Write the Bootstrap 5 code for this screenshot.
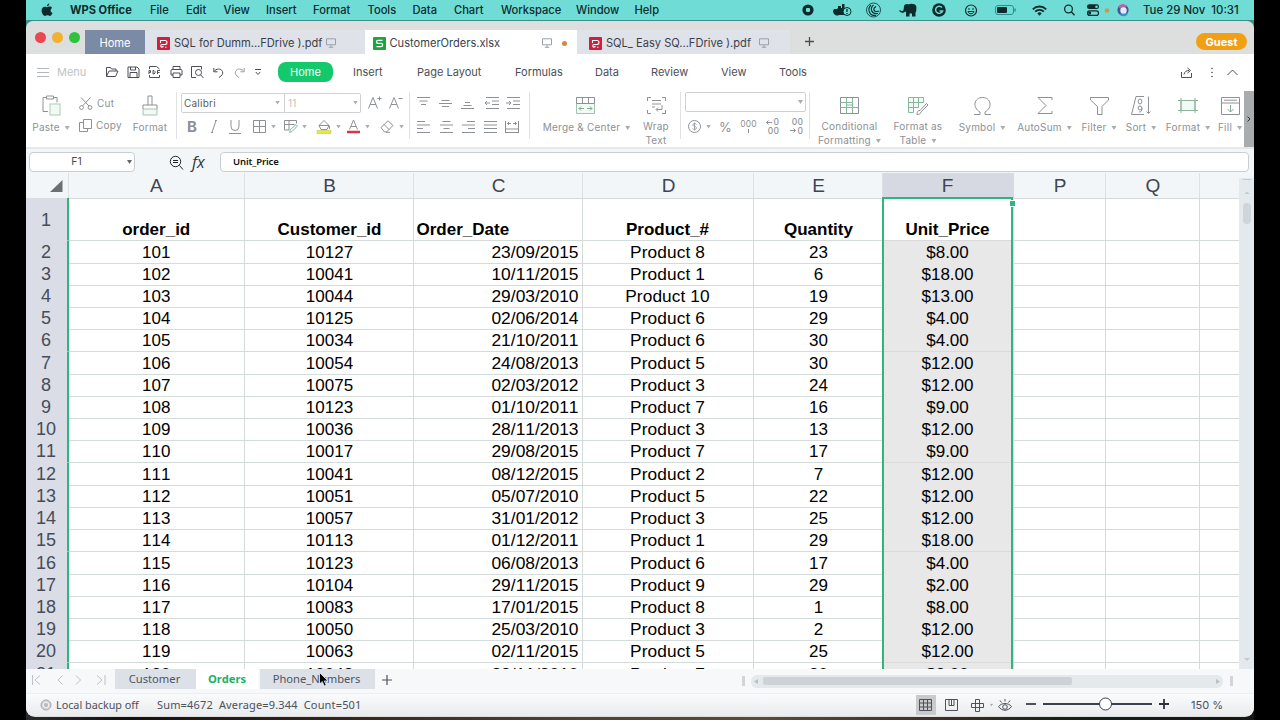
<!DOCTYPE html>
<html lang="en">
<head>
<meta charset="utf-8">
<title>CustomerOrders.xlsx</title>
<link rel="stylesheet" href="https://cdn.jsdelivr.net/npm/bootstrap@5.3.0/dist/css/bootstrap.min.css">
<script src="https://cdn.jsdelivr.net/npm/bootstrap@5.3.0/dist/js/bootstrap.bundle.min.js"></script>
<style>
  body{background:#000;font-family:Inter,"Liberation Sans",sans-serif;font-size:11px;line-height:14px;color:#4b4f55;overflow:hidden;stroke:currentColor;fill:none}
  svg{display:block;flex:none;overflow:visible}
  .desk{width:1228px;height:720px;margin-left:26px;background:linear-gradient(90deg,#2a2a2c 0,#15110f 8%,#2a2019 20%,#4f4136 45%,#5a4a3e 60%,#3b2e26 75%,#142018 85%,#171515 100%)}
  .fill-i{fill:currentColor;stroke:none}
  .row-grid{display:grid;align-items:center;white-space:nowrap}
  .row-grid>*{min-width:0}

  .menubar{height:20px;background:#6fddd6;color:#0c2b2d;font-weight:500;font-size:11.15px;
    grid-template-columns:15px 29px 80px 36px 37.5px 42.5px 47px 54.5px 45px 41.5px 47px 75px 58.5px 168.5px 36px 29px 33px 34px 31px 27px 38px 32px 26.5px 16px 12.5px 25px auto}
  .app-name{font-weight:700;font-size:11.1px}
  .clock{font-size:11.4px}
  .backline{background:linear-gradient(#3d8f8b 50px,transparent 50px);height:697px;padding-top:1px}
  .win{height:696px;background:#dcdfdd;border-radius:7px 7px 9px 9px;overflow:hidden}

  .tabstrip{height:33px;flex:none;grid-template-columns:59px 60px 219.5px 212.5px 219px 400px auto;align-items:end}
  .doc-tab{height:24px;background:#dfe2e8;display:flex;align-items:center;font-size:11.1px;color:#3a3f4a;padding-top:2px}
  .doc-tab.on{background:#fff}
  .doc-tab.home{background:#7b8ba6;color:#fff;justify-content:center}
  .light{width:11px;height:11px;border-radius:50%}
  .guest{background:#f0a012;color:#fff;font-weight:700;width:51px;height:17px;line-height:18px;border-radius:9px;text-align:center;margin:0 0 4px 0;font-size:11px}

  .ribbon-tabs{height:34px;flex:none;background:#fff;padding:2px 0 0 11px;
    grid-template-columns:20px 48px 22px 21px 22px 21px 22px 21px 21px 23px 75px 64px 98px 80px 56px 70px 58px 402px 30px 16px auto}
  .pill{background:#14c96c;color:#fff;width:55px;height:20px;line-height:20px;border-radius:8px;text-align:center}
  .faint{color:#bfc3c6}

  .ribbon{display:grid;height:59px;flex:none;background:#fff;color:#8d9195;font-size:10px;letter-spacing:.22px;white-space:nowrap;
    grid-template-columns:50px 50px 51px 233px 120px 110px 41px 129px 79px 58px 70px 55px 54px 30px 60px 28px 10px}
  .tool{display:flex;flex-direction:column;align-items:center;padding-top:7px}
  .tool .pic{height:21px;display:flex;align-items:center;margin-bottom:4px}
  .tool.two .pic{margin-bottom:3px}
  .tool div.cap{line-height:14px}
  .sepbox{position:relative}
  .sepbox::after{content:"";position:absolute;right:0;top:4px;height:47px;border-right:1px solid #e0e2e3}
  .dd{display:inline-block;width:5px;height:4px;background:#a9adb0;clip-path:polygon(0 0,100% 0,50% 100%);vertical-align:1px;margin-left:5px;flex:none}
  .combo{border:1px solid #cfd1d2;border-radius:2px;height:20px;display:flex;align-items:center}
  .font-a{grid-template-columns:104px 83px 21px 16px}
  .font-b{grid-template-columns:22px 21px 22px 7px 31px 33px 30px 33px 27px}
  .al-a{padding-left:7px;grid-template-columns:22px 22px 24px 21px 20px}
  .al-b{padding-left:7px;grid-template-columns:22.5px 22px 22px 21.5px 20px}
  .num-b{padding-left:1px;grid-template-columns:27px 25px 21px 27px 21px;justify-items:center}
  .digits{font-size:8.5px;line-height:8.5px;font-weight:500;letter-spacing:.4px}
  .digits>span{display:flex;justify-content:flex-end;align-items:center;gap:2px}
  .more{background:#a9acaf;color:#333;margin-top:3px;height:56px;display:flex;align-items:center;justify-content:center}

  .fbar{height:26px;flex:none;background:#f3f6f8;border-top:2px solid #e6e7e8;grid-template-columns:106px 33px 22px 30px 1029px;padding:2px 0 0 3px}
  .field{height:20px;background:#fff;border:1px solid #c9cfd0;border-radius:4px;display:flex;align-items:center}
  .ftext{font:600 9.5px/14px "Noto Sans",sans-serif;color:#111;padding-left:12px;letter-spacing:-.1px}

  .grid-area{height:496px;overflow:hidden;background:#fff}
  .sheet{position:relative;width:1213px;font-family:"Liberation Sans",sans-serif;font-size:17px;font-kerning:none;color:#000}
  .sheet .line{display:grid;grid-template-columns:43px 175.5px 169px 169px 171px 129px 131px 92px 94px 39.5px;height:22.22px;line-height:21px}
  .sheet .line>div{border-right:1px solid #d3dbdb;border-bottom:1px solid #d3dbdb;text-align:center;padding:1px 0 0 2px;white-space:nowrap}
  .sheet .line>div:first-child{background:#dadde6;color:#464c5a;font-size:18px;border-color:#dadde6;border-right:2px solid #2fb67c;padding:1px 1px 0 0}
  .sheet .line>div:nth-child(2){padding-left:0}
  .sheet .line>div:last-child{border-right:0}
  .sheet .line>.date{text-align:right;padding-right:3px;font-size:17.4px}
  .sheet .line>.prod{font-size:17.3px;letter-spacing:.1px;padding-left:0}
  .sheet .line>.sel{background:#e8e8e8;border-color:#dadada;padding-left:0}
  .sheet .letters{height:24.5px;line-height:25px;background:#f3f6f8;color:#3e4456;font-size:19px}
  .sheet .letters>div{padding-top:0;border-right-color:#dce2e4}
  .sheet .letters>div:first-child{background:#f3f6f8;border-right:1px solid #dce2e4;border-bottom-color:#f3f6f8;display:flex;justify-content:end;align-items:center}
  .sheet .letters>.sel{background:#d6d9e2}
  .sheet .titles{height:43px;font-weight:700;line-height:20px}
  .sheet .titles>div{padding-top:22px}
  .sheet .titles>div:first-child{font-weight:400;padding-top:12px}
  .sheet .titles>.sel{background:#fff}
  .sheet .titles>.date{text-align:left;padding-left:3px;font-size:17px}
  .sheet .titles>.prod{font-size:17px;letter-spacing:0}
  .marquee{position:absolute;left:856px;top:23.5px;width:131px;height:480px;border:2px solid #2fb67c}
  .marquee::after{content:"";position:absolute;right:-5px;top:1px;width:7px;height:7px;background:#2fb67c;border:1px solid #fff}
  .vbar{width:15px;background:#e4e9ed;border-top:5px solid #f3f6f8;padding:1px 0 7px;color:#c3cad0}
  .vthumb{width:8px;height:21px;border-radius:4px;background:#cfd5da}

  .sheets{height:24px;background:#f6f8fa;font-family:"Noto Sans",sans-serif;font-size:11.2px;color:#4f5561;
    grid-template-columns:89px 81px 64px 115px 24px 343px 9px 472px 9px auto}
  .sh{height:20px;line-height:20px;text-align:center;background:#dce0e7;align-self:start;padding-right:2px}
  .sh.on{background:#fff;color:#1db068;font-weight:700;margin-right:2px;padding:0}
  .hbar{height:13px;border-radius:6px;background:#e4e9ec;padding:0 3px;color:#b8c0c5}
  .hthumb{width:309px;height:8px;border-radius:2px;background:#cdd2d6;margin-left:5px}
  .grip{width:3px;height:10px;background:#d0d5d9}
  .statusbar{height:23px;background:linear-gradient(#fafbfc,#e9ebed);border-top:1px solid #eceef0;font-family:"Noto Sans",sans-serif;font-size:11px;color:#4c515b;
    grid-template-columns:14px 16px 101px 758.5px 24.5px 25px 21px 38px 19px 116px 32px auto}
  .s1{font-size:10.8px}
  .s2{letter-spacing:.16px}
  .viewon{background:#c8cacc;width:20px;height:20px;display:flex;align-items:center;justify-content:center}
  .pointer{position:absolute;left:319px;top:672px}
</style>
</head>
<body>
<svg width="0" height="0" class="position-absolute">
  <symbol id="pdf" viewBox="0 0 13 13"><rect width="13" height="13" rx="1" fill="#cf1f3c" stroke="none"/><path d="M3.500 6V3.500h4.500a2 2 0 0 1 0 4H5a1.300 1.300 0 1 0 1.300 1.300M8 10.200h1.500" stroke="#fff" stroke-width="1.100"/></symbol>
  <symbol id="screen" viewBox="0 0 10 10"><path d="M.5.8h9v6h-9zM5 6.800v2.400M2.800 9.300h4.400" stroke="#9aa0aa"/></symbol>
</svg>
<div class="desk">
  <header class="menubar row-grid">
    <i></i>
    <svg width="12" height="14" viewBox="0 0 12 14" class="fill-i"><path d="M8.300.6c.1 1.500-1 2.800-2.400 2.900C5.700 2.100 6.900.8 8.300.6zM6.200 4.300c.5 0 1.300-.7 2.500-.7 1 0 1.900.5 2.400 1.300-2.200 1.300-1.800 4.200.4 5-.5 1.400-1.600 3-2.600 3-1 0-1.300-.6-2.500-.6s-1.500.6-2.400.6C2.600 12.900.6 10.400.6 7.700c0-2.500 1.600-4 3.200-4 1.100 0 1.800.6 2.400.6z"/></svg>
    <span class="app-name">WPS Office</span><span>File</span><span>Edit</span><span>View</span><span>Insert</span><span>Format</span><span>Tools</span><span>Data</span><span>Chart</span><span>Workspace</span><span>Window</span><span>Help</span>
    <svg width="12" height="12" viewBox="0 0 12 12"><circle cx="5" cy="6" r="5.600" class="fill-i"/><rect x="3" y="4" width="4" height="4" rx="1" fill="#6fddd6" stroke="none"/></svg>
    <svg width="18" height="14" viewBox="0 0 18 14"><path d="M-5 6h3l1-1h10v3a4 4 0 0 1-4 4H0a4 4 0 0 1-5-6zM-1 3h3v2h-3zM3 1h2.500v4H3z" class="fill-i"/><circle cx="8" cy="8.500" r="4" fill="#6fddd6"/><path d="M8 6v3M8 10v1" stroke-width="1.300"/></svg>
    <svg width="16" height="16" viewBox="0 0 16 16" stroke-width="1.100"><circle cx="5.500" cy="8" r="7" stroke-width=".8"/><path d="M3 3C-1 7 1 14 8 13.500M5.500 3C1 7 4 12.500 10 11.500M8 4.500C4 7 6 10.800 11 9"/></svg>
    <svg width="18" height="14" viewBox="0 0 18 14" class="fill-i"><path d="M14 1.500c-2-1-5-1.200-6.500 0C6 .5 3.500 1 3 3.500L2.500 7C2 8.500 0 8.500-1 7c-.8 0-.8 1 0 1.800C.5 10.500 3 10 4.200 8.500L5 9V13.500h3.500V10.500h2.500v3H14.500V9.500l.8-1.500V6c.5-2-.2-3.700-1.300-4.500z"/></svg>
    <svg width="14" height="14" viewBox="0 0 14 14"><circle cx="4" cy="7" r="6.800" class="fill-i"/><path d="M7 4.500A3.600 3.600 0 1 0 7.600 8H4.500" stroke="#6fddd6" stroke-width="1.400"/></svg>
    <svg width="13" height="13" viewBox="0 0 13 13"><circle cx="5" cy="6.500" r="5.500" stroke-width="1.200"/><circle cx="3" cy="5" r=".4"/><circle cx="7" cy="5" r=".4"/><path d="M2 7.500h6c-.5 3-5.500 3-6 0z"/></svg>
    <svg width="22" height="10" viewBox="0 0 22 10"><rect x="2.500" y=".5" width="18" height="9" rx="2.500" stroke="#2d8f8b"/><rect x="4" y="2" width="10" height="6" rx="1" class="fill-i"/><path d="M22 3.500v3" stroke="#2d8f8b" stroke-width="1.500"/></svg>
    <svg width="15" height="11" viewBox="0 0 15 11" stroke-width="1.900"><path d="M1.800 4.300a9.500 9.500 0 0 1 13.400 0M4.200 6.700a6 6 0 0 1 8.600 0"/><path d="M6.300 8.500a3 3 0 0 1 4.400 0L8.500 10.800z" class="fill-i"/></svg>
    <svg width="12" height="12" viewBox="0 0 12 12" stroke-width="1.300"><circle cx="5.500" cy="5" r="3.900"/><path d="M8.300 7.800l3.200 3.400"/></svg>
    <svg width="12" height="12" viewBox="0 0 12 12" stroke-width="1.200"><rect x="-3" y=".2" width="12" height="4.900" rx="2.400" class="fill-i"/><circle cx="6.500" cy="2.700" r="1.300" fill="#6fddd6" stroke="none"/><rect x="-2.500" y="6.900" width="11" height="4.500" rx="2.200"/><circle cx="-.3" cy="9.100" r="1.500" class="fill-i"/></svg>
    <svg width="5" height="5" viewBox="0 0 5 5"><circle cx="1" cy="2.500" r="2.300" fill="#c79a4c" stroke="none"/></svg>
    <svg width="12" height="12" viewBox="0 0 12 12" stroke="none"><circle cx="5" cy="6" r="5.600" fill="#4a5590"/><path d="M0 3a5.600 5.600 0 0 1 9-1L5 6z" fill="#c0609f"/><path d="M2 11a5.600 5.600 0 0 0 8-1L5 6z" fill="#3a8fd0"/><circle cx="5.500" cy="6.500" r="3.200" fill="#d5efff"/></svg>
    <span class="clock">Tue 29 Nov&nbsp; 10:31</span>
  </header>
  <div class="backline">
  <main class="win d-flex flex-column">
    <nav class="tabstrip row-grid">
      <div class="d-flex align-self-center" style="gap:6px;padding-left:8.500px;padding-bottom:0"><span class="light" style="background:#e8484f"></span><span class="light" style="background:#f2b32c"></span><span class="light" style="background:#2ec23f"></span></div>
      <div class="doc-tab home">Home</div>
      <div class="doc-tab ps-2"><svg width="13" height="13" class="ms-1 me-1"><use href="#pdf"/></svg><span>SQL for Dumm...FDrive ).pdf</span><svg width="10" height="10" class="ms-1"><use href="#screen"/></svg></div>
      <div class="doc-tab on ps-2"><svg width="13" height="13" viewBox="0 0 13 13" class="me-1"><rect width="13" height="13" rx="1" fill="#1aa63a" stroke="none"/><path d="M9.500 3.400H5a1.500 1.500 0 0 0 0 3h3a1.600 1.600 0 0 1 0 3.300H3.500" stroke="#fff" stroke-width="1.300"/></svg><span>CustomerOrders.xlsx</span><svg width="10" height="10" class="ms-auto"><use href="#screen"/></svg><span class="rounded-circle" style="width:5px;height:5px;background:#d08a3e;margin:0 10px 0 10px"></span></div>
      <div class="doc-tab ps-2" style="margin-right:6px"><svg width="13" height="13" class="ms-1 me-1"><use href="#pdf"/></svg><span>SQL_ Easy SQ...FDrive ).pdf</span><svg width="10" height="10" class="ms-2"><use href="#screen"/></svg></div>
      <svg width="9" height="9" viewBox="0 0 9 9" class="ms-2 mb-2" stroke-width="1.300"><path d="M5.500 0v9M1 4.500h9"/></svg>
      <div class="guest">Guest</div>
    </nav>

    <nav class="ribbon-tabs row-grid">
      <svg width="12" height="9" viewBox="0 0 12 9" stroke="#b4b8bb"><path d="M0 .5h12M0 4.500h12M0 8.500h12"/></svg>
      <span class="faint">Menu</span>
      <svg width="14" height="12" viewBox="0 0 14 12"><path d="M1.500 10.500v-9h4l1 1.500h4.500v2M1.500 10.500l2.500-5.500h9l-2.500 5.500z"/></svg>
      <svg width="13" height="12" viewBox="0 0 13 12"><path d="M1 1h9l2 2v8.500H1zM3.500 1v3h5V1M3 11.500v-5h7v5"/></svg>
      <svg width="13" height="12" viewBox="0 0 13 12"><path d="M1.500 3V.5h7l3 2.500M1.500 9v2.500h10V9M1 8V4.500h1.500v2H1M5 4.500v3.500h1l1-1v-1.500l-1-1zM9.500 8V4.500H12M9.500 6.500h2"/></svg>
      <svg width="14" height="12" viewBox="0 0 14 12"><path d="M3 3.500v-3h7v3M3 9H1V4.500a1 1 0 0 1 1-1h9a1 1 0 0 1 1 1V9h-2M3 7h7v4.500H3z"/></svg>
      <svg width="13" height="13" viewBox="0 0 13 13"><path d="M5 11.500H.5V.5h10v3"/><circle cx="7.500" cy="6.500" r="3"/><path d="M9.500 8.800l3 3.200"/></svg>
      <svg width="11" height="11" viewBox="0 0 11 11"><path d="M.8 1v3.800h3.800M1 4.500C3 1.500 8 1 9.500 4.500c.8 2.500-.5 4-3.500 6"/></svg>
      <svg width="11" height="11" viewBox="0 0 11 11" stroke="#9da1a5"><path d="M10.200 1v3.800H6.400M10 4.500C8 1.500 3 1 1.500 4.500c-.8 2.500.5 4 3.500 6"/></svg>
      <svg width="7" height="7" viewBox="0 0 7 7"><path d="M0 .5h6M.8 3L3 5.500 5.200 3"/></svg>
      <span class="pill">Home</span><span>Insert</span><span>Page Layout</span><span>Formulas</span><span>Data</span><span>Review</span><span>View</span><span>Tools</span>
      <svg width="12" height="11" viewBox="0 0 12 11"><path d="M.5 5v5.500h10V6M3 7.500c.5-3 2.500-4 5-4M6.500 1L9.500 3.500 6.500 6"/></svg>
      <svg width="3" height="11" viewBox="0 0 3 11" class="fill-i"><circle cx="1" cy="1.500" r=".8"/><circle cx="1" cy="5.500" r=".8"/><circle cx="1" cy="9.500" r=".8"/></svg>
      <svg width="11" height="7" viewBox="0 0 11 7"><path d="M.5 6l5-5 5 5"/></svg>
    </nav>

    <section class="ribbon">
      <div class="tool"><div class="pic"><svg width="19" height="21" viewBox="0 0 19 21"><path d="M6 16.500H1v-14h3M12 2.500h3v5M4.500 1h7v3h-7z"/><rect x="8" y="9" width="10" height="11" fill="#f1faf4" stroke="#a9cdb9"/></svg></div><div class="cap">Paste<i class="dd"></i></div></div>
      <div class="d-flex flex-column" style="padding:8px 0 0 3px">
        <div class="d-flex align-items-center gap-1" style="height:14px;margin-bottom:8px"><svg width="14" height="13" viewBox="0 0 14 13"><path d="M2 .5l8 8.500M11.500.5l-8 8.500"/><circle cx="2.500" cy="10.500" r="1.900"/><circle cx="11" cy="10.500" r="1.900"/></svg>Cut</div>
        <div class="d-flex align-items-center" style="height:14px;gap:3px"><svg width="14" height="13" viewBox="0 0 14 13"><path d="M4.500 .5h8v9h-8zM4.500 3.500h-4v9h8v-3"/></svg>Copy</div>
      </div>
      <div class="tool sepbox" style="padding-right:3px"><div class="pic"><svg width="16" height="21" viewBox="0 0 16 21"><path d="M6 10V1h4v9M1 14v-4h14v4"/><path d="M1 14h14v6H1z" stroke="#a3c4b0" fill="#f1faf4"/></svg></div><div class="cap">Format</div></div>
      <div class="sepbox" style="padding:4px 0 0 4px">
        <div class="font-a row-grid" style="height:21px">
          <div class="combo rounded-end-0"><span class="text-dark opacity-75" style="padding-left:2px">Calibri</span><i class="dd ms-auto me-1"></i></div>
          <div class="combo rounded-start-0 border-start-0" style="margin-right:7px"><span class="faint" style="padding-left:3px">11</span><i class="dd ms-auto" style="margin-right:2px"></i></div>
          <svg width="14" height="14" viewBox="0 0 14 14"><path d="M.5 12.500L5 1.500 9.500 12.500M2 8.500h6M9.500 2.500h4M11.500 .5v4"/></svg>
          <svg width="14" height="14" viewBox="0 0 14 14"><path d="M.5 12.500L5 1.500 9.500 12.500M2 8.500h6M9.500 2.500h4"/></svg>
        </div>
        <div class="font-b row-grid" style="height:27px">
          <b class="text-center" style="font-size:15px">B</b>
          <svg width="8" height="13" viewBox="0 0 8 13" class="mx-auto"><path d="M6 .5L2 12.500M5 .5h2M1 12.500h2"/></svg>
          <svg width="12" height="14" viewBox="0 0 12 14" class="mx-auto"><path d="M2 0v6.500a4 4 0 0 0 8 0V0"/><path d="M0 13.500h12"/></svg><i></i>
          <span class="d-flex align-items-center"><svg width="13" height="13" viewBox="0 0 13 13"><path d="M.5.500h12v12H.5zM6.500.5v12M.5 6.500h12"/></svg><i class="dd"></i></span>
          <span class="d-flex align-items-center"><svg width="13" height="13" viewBox="0 0 13 13"><path d="M5 10H.5V.500h12v3M.5 4.500h10M5 .5v9.500"/><path d="M5.500 12.500l1-3 5.500-5 1.500 1.500-5.500 5.500z" stroke="#8cbda0" fill="#f1faf4"/></svg><i class="dd"></i></span>
          <span class="d-flex align-items-center"><svg width="14" height="14" viewBox="0 0 14 14"><path d="M2 5.500L7 .5l5 5-2 4H4zM2 5.500h10M12.500 6v3"/><rect x="0" y="10.500" width="14" height="3" fill="#e3ec3c" stroke="#b9bf4c" stroke-width=".5"/></svg><i class="dd"></i></span>
          <span class="d-flex align-items-center"><svg width="13" height="14" viewBox="0 0 13 14"><path d="M2.500 9.500L6.500 0l4 9.500M4 6.500h5"/><path d="M0 12h13" stroke="#d8344c" stroke-width="2.500"/></svg><i class="dd"></i></span>
          <span class="d-flex align-items-center"><svg width="14" height="13" viewBox="0 0 14 13"><path d="M1 7.500L8 .8l5 4.700-6.500 6.500h-2zM4 4.500l5 5M6 12.300h4"/></svg><i class="dd"></i></span>
        </div>
      </div>
      <div class="sepbox">
        <div class="al-a row-grid" style="height:29px">
          <svg width="13" height="12" viewBox="0 0 13 12"><path d="M0 .5h13M2.500 4h8M4 7.500h5"/></svg>
          <svg width="13" height="12" viewBox="0 0 13 12"><path d="M2.500 3.500h8M0 6.500h13M3 9.500h7"/></svg>
          <svg width="13" height="12" viewBox="0 0 13 12"><path d="M4 5.500h5M2.500 8.500h8M0 11.500h13"/></svg>
          <svg width="14" height="12" viewBox="0 0 14 12"><path d="M1 .5h13M7 4h7M7 7.500h7M1 11.500h13M5 6H0M2 4L0 6l2 2"/></svg>
          <svg width="14" height="12" viewBox="0 0 14 12"><path d="M1 .5h13M7 4h7M7 7.500h7M1 11.500h13M0 6h5M3 4l2 2-2 2"/></svg>
        </div>
        <div class="al-b row-grid" style="height:20px">
          <svg width="13" height="12" viewBox="0 0 13 12"><path d="M0 .5h8M0 4h13M0 7.500h6M0 11.500h13"/></svg>
          <svg width="13" height="12" viewBox="0 0 13 12"><path d="M2.500 .5h8M0 4h13M3.500 7.500h6M0 11.500h13"/></svg>
          <svg width="13" height="12" viewBox="0 0 13 12"><path d="M5 .5h8M0 4h13M6 7.500h7M0 11.500h13"/></svg>
          <svg width="13" height="12" viewBox="0 0 13 12"><path d="M0 .5h13M0 4h13M0 7.500h13M0 11.500h13"/></svg>
          <svg width="14" height="12" viewBox="0 0 14 12"><path d="M.5 0v12M13.500 0v12M2.500 2.500h3.500M8 2.500h3.500M4 1L2.500 2.500 4 4M10 1l1.500 1.500L10 4M.5 8h13M.5 11.500h13"/></svg>
        </div>
      </div>
      <div class="tool"><div class="pic"><svg width="19" height="17" viewBox="0 0 19 17"><path d="M.5 6.500h18v10H.5z" stroke="#a3c4b0" fill="#f1faf4"/><path d="M.5 6.500v-6h18v6zM6.500.5v6M12.500.5v6"/><path d="M3 11.500h5M11 11.500h5M5 9.500l-2 2 2 2M14 9.500l2 2-2 2" stroke="#7fae92"/></svg></div><div class="cap" style="padding-left:3px">Merge &amp; Center<i class="dd"></i></div></div>
      <div class="tool two sepbox" style="padding-right:9px"><div class="pic"><svg width="19" height="17" viewBox="0 0 19 17"><path d="M.5 4V.5H4M15 .5h3.500V4M18.500 13v3.500H15M4 16.500H.5V13M5 3.500h9M5 7h9M5 10h3M15 8v4.500H9.500M11 10.500l-2 2 2 2"/></svg></div><div class="cap text-center">Wrap<br>Text</div></div>
      <div class="sepbox" style="padding:4px 0 0 4px">
        <div class="combo" style="width:121px"><i class="dd ms-auto" style="margin-right:2px"></i></div>
        <div class="num-b row-grid" style="height:29px">
          <span class="d-flex align-items-center"><svg width="13" height="13" viewBox="0 0 13 13"><circle cx="6.500" cy="6.500" r="6"/><path d="M8.500 4.500C7.500 3 4.500 3.500 4.800 5.200c.4 1.500 3.400 1 3.700 2.600C8.700 9.700 5.500 10 4.500 8.500M6.500 2.500v8" stroke-width=".8"/></svg><i class="dd"></i></span>
          <span style="font-size:13px">%</span>
          <span class="d-flex flex-column align-items-center" style="font-size:8.500px;line-height:9px">000<svg width="1" height="4" viewBox="0 0 1 4"><path d="M.5 0v4"/></svg></span>
          <span class="digits"><span><svg width="6" height="5" viewBox="0 0 6 5"><path d="M6 2.500H.5M2.500.5l-2 2 2 2"/></svg>0</span><span>00</span></span>
          <span class="digits"><span>00</span><span><svg width="6" height="5" viewBox="0 0 6 5"><path d="M0 2.500h5.500M3.500.5l2 2-2 2"/></svg>0</span></span>
        </div>
      </div>
      <div class="tool two"><div class="pic"><svg width="19" height="17" viewBox="0 0 19 17"><path d="M.5.5h18v16H.5z"/><path d="M.5 5.500h12M.5 10.500h6M6.500.5v16M6.500 10.500h6v6M12.500 5.500v5h6M12.500 .5v5M6.500 8h6" stroke="#86b79a"/></svg></div><div class="cap text-center">Conditional<br>Formatting<i class="dd"></i></div></div>
      <div class="tool two"><div class="pic"><svg width="20" height="18" viewBox="0 0 20 18"><path d="M.5.5h15v5h-5v5h-5v5h-5zM5.500.5v10M10.500.5v5M.5 5.500h10M.5 10.500h5" stroke="#86b79a" fill="#f1faf4"/><path d="M9 17.500c0-3 1-4 3-4l6.500-7 1.500 1.500-7 7c-.5 2-2 2.500-4 2.500z"/></svg></div><div class="cap text-center">Format as<br>Table<i class="dd"></i></div></div>
      <div class="tool"><div class="pic"><svg width="19" height="18" viewBox="0 0 19 18"><path d="M1 17.500h6v-2.500C-1 10.500 1 .5 9.500 .5S20 10.500 12 15v2.500h6"/></svg></div><div class="cap">Symbol<i class="dd"></i></div></div>
      <div class="tool"><div class="pic"><svg width="16" height="17" viewBox="0 0 16 17"><path d="M15 3V.5H1L9 8.500 1 16.500h14V14"/></svg></div><div class="cap">AutoSum<i class="dd"></i></div></div>
      <div class="tool"><div class="pic"><svg width="19" height="18" viewBox="0 0 19 18"><path d="M.5.500h18v2.500L12 9.500v8H7.500v-8L.5 3z"/></svg></div><div class="cap">Filter<i class="dd"></i></div></div>
      <div class="tool"><div class="pic"><svg width="20" height="19" viewBox="0 0 20 19"><path d="M13 .5H5L.5 18.500H13"/><ellipse cx="9" cy="5.500" rx="1.800" ry="2.500"/><circle cx="9" cy="12" r="1.900"/><path d="M11 12c0 3-1 4-3 4M17.500 .5v17M15.500 15.500l2 2 2-2"/></svg></div><div class="cap">Sort<i class="dd"></i></div></div>
      <div class="tool"><div class="pic ps-1"><svg width="20" height="18" viewBox="0 0 20 18"><path d="M3 3.500h14v10H3z" fill="#f1faf4" stroke="#86b79a"/><path d="M0 3.500h20M0 13.500h20M3 1v15M17 1v15" stroke="#8fb29d"/></svg></div><div class="cap ps-1">Format<i class="dd"></i></div></div>
      <div class="tool"><div class="pic"><svg width="19" height="18" viewBox="0 0 19 18"><path d="M.5.500h18v17H.5zM.5 6h18M3 3.200h13"/><path d="M9.500 8v7M6.500 12l3 3 3-3" stroke="#7fae92"/></svg></div><div class="cap">Fill<i class="dd"></i></div></div>
      <div class="more"><svg width="4" height="6" viewBox="0 0 4 6"><path d="M.5.500L3 3 .5 5.500"/></svg></div>
    </section>

    <section class="fbar row-grid">
      <div class="field"><span class="flex-fill text-center" style="padding-right:4px;font-size:10.500px">F1</span><i class="dd" style="margin:0 2px 0 0;background:#666"></i></div>
      <i></i>
      <svg width="14" height="15" viewBox="0 0 14 15" class="text-dark" style="margin-left:1px"><circle cx="6.500" cy="6.500" r="5.200"/><path d="M10.500 10.500l3.500 4M4 5.500h5M4 7.500h5"/></svg>
      <em style="font:italic 16px/18px 'Open Sans',sans-serif;color:#33363c;padding-left:2px">fx</em>
      <div class="field"><span class="ftext">Unit_Price</span></div>
    </section>

    <section class="grid-area d-flex flex-shrink-0">
      <div class="sheet" id="sheet"><div class="marquee"></div></div>
      <aside class="vbar d-flex flex-column align-items-center">
        <svg width="8" height="16" viewBox="0 0 8 16" class="mb-2"><path d="M0 .5h8"/><path d="M1.500 15L4 12.500 6.500 15z" class="fill-i"/></svg>
        <div class="vthumb"></div>
        <svg width="6" height="4" viewBox="0 0 6 4" class="fill-i mt-auto"><path d="M0 0h6L3 3z"/></svg>
      </aside>
    </section>

    <nav class="sheets row-grid flex-shrink-0">
      <svg width="75" height="10" viewBox="0 0 75 10" stroke="#bcc1c7" style="margin:-3px 0 0 6px"><path d="M.5 0v10M8 .500L3 5l5 4.500M30.500.5L26 5l4.500 4.500M44 .5L48.500 5 44 9.500M65 .5L70 5l-5 4.500M73 0v10"/></svg>
      <div class="sh">Customer</div><div class="sh on">Orders</div><div class="sh">Phone_Numbers</div>
      <svg width="10" height="10" viewBox="0 0 10 10" stroke-width="1.200" style="margin:-3px 0 0 7px"><path d="M5 0v10M0 5h10"/></svg>
      <i></i><div class="grip"></div>
      <div class="hbar d-flex align-items-center"><svg width="4" height="5" viewBox="0 0 4 5" class="fill-i"><path d="M4 0v5L0 2.500z"/></svg><div class="hthumb"></div><svg width="4" height="5" viewBox="0 0 4 5" class="fill-i ms-auto"><path d="M0 0v5l4-2.500z"/></svg></div>
      <i></i><div class="grip" style="margin-left:-2px"></div>
    </nav>
    <footer class="statusbar row-grid flex-shrink-0">
      <i></i>
      <svg width="12" height="12" viewBox="0 0 12 12"><circle cx="6" cy="6" r="5" fill="#d5d7da" stroke="#a2a5aa"/><circle cx="6" cy="6" r="2.700" fill="#b9bcc0" stroke="#f2f2f2"/></svg>
      <span class="s1">Local backup off</span><span class="s2">Sum=4672&nbsp; Average=9.344&nbsp; Count=501</span>
      <span class="viewon"><svg width="13" height="12" viewBox="0 0 13 12"><path d="M.5.500h12v11H.5zM.5 4h12M.5 8h12M4.500.5v11M8.500.5v11"/></svg></span>
      <svg width="13" height="12" viewBox="0 0 13 12" style="margin-left:5px"><path d="M.5.500h12v11H.5zM4 .5v6h5v-6M6.500.500v6"/></svg>
      <svg width="13" height="13" viewBox="0 0 13 13" style="margin-left:6px"><path d="M4.500.5h4v12h-4zM.5 4.500h12v4H.5z"/></svg>
      <span class="d-flex align-items-center"><i class="dd" style="transform:scale(.7);margin-left:3px"></i><svg width="14" height="13" viewBox="0 0 14 13" style="margin-left:4px"><path d="M.5 7.500C4 3.500 10 3.500 13.500 7.500 10 12.500 4 12.500 .5 7.500z"/><circle cx="7" cy="8" r="2.300"/><path d="M7 0v2.500M2 1.500l1.500 2M12 1.500l-1.500 2"/></svg></span>
      <svg width="10" height="2" viewBox="0 0 10 2" stroke-width="2" style="margin:-2px 0 0 2px"><path d="M0 1h10"/></svg>
      <svg width="109" height="14" viewBox="0 0 109 14" stroke="#3b404c" style="margin-top:-2px"><path d="M0 7h109" stroke-width="2"/><circle cx="62.500" cy="7" r="6" fill="#fff"/></svg>
      <svg width="10" height="10" viewBox="0 0 10 10" stroke="#2e323c" stroke-width="1.800" style="margin-top:-2px"><path d="M5 0v10M0 5h10"/></svg>
      <span style="font-family:Inter,sans-serif">150 %</span>
    </footer>
  </main>
  </div>
</div>
<svg class="pointer" width="10" height="16" viewBox="0 0 10 16"><path d="M.5.500v11.500l2.800-2.500 1.900 4.500 2-.9-1.900-4.200h3.700z" fill="#000" stroke="#fff" stroke-width=".7"/></svg>
<script>
  const rows = `101 10127 23/09/2015 8 23 8
102 10041 10/11/2015 1 6 18
103 10044 29/03/2010 10 19 13
104 10125 02/06/2014 6 29 4
105 10034 21/10/2011 6 30 4
106 10054 24/08/2013 5 30 12
107 10075 02/03/2012 3 24 12
108 10123 01/10/2011 7 16 9
109 10036 28/11/2013 3 13 12
110 10017 29/08/2015 7 17 9
111 10041 08/12/2015 2 7 12
112 10051 05/07/2010 5 22 12
113 10057 31/01/2012 3 25 12
114 10113 01/12/2011 1 29 18
115 10123 06/08/2013 6 17 4
116 10104 29/11/2015 9 29 2
117 10083 17/01/2015 8 1 8
118 10050 25/03/2010 3 2 12
119 10063 02/11/2015 5 25 12
120 10048 23/11/2010 7 20 9`.split('\n').map(r => r.split(' '));
  const kinds = {3: 'date', 4: 'prod', 6: 'sel'};
  const line = (cls, cells) => `<div class="line ${cls}">` + cells.map((c, i) =>
    `<div class="${cls === 'letters' && i < 6 ? '' : kinds[i] || ''}">${c}</div>`).join('') + '</div>';
  const corner = '<svg width="13" height="12" viewBox="0 0 13 12" style="margin-right:4px"><path d="M12.500 0v12H0z" fill="#6b7073" stroke="none"/></svg>';
  document.getElementById('sheet').insertAdjacentHTML('afterbegin',
    line('letters', [corner, 'A', 'B', 'C', 'D', 'E', 'F', 'P', 'Q', '']) +
    line('titles', [1, 'order_id', 'Customer_id', 'Order_Date', 'Product_#', 'Quantity', 'Unit_Price', '', '', '']) +
    rows.map((r, i) => line('', [i + 2, r[0], r[1], r[2], 'Product ' + r[3], r[4], '$' + r[5] + '.00', '', '', ''])).join(''));
</script>
</body>
</html>
